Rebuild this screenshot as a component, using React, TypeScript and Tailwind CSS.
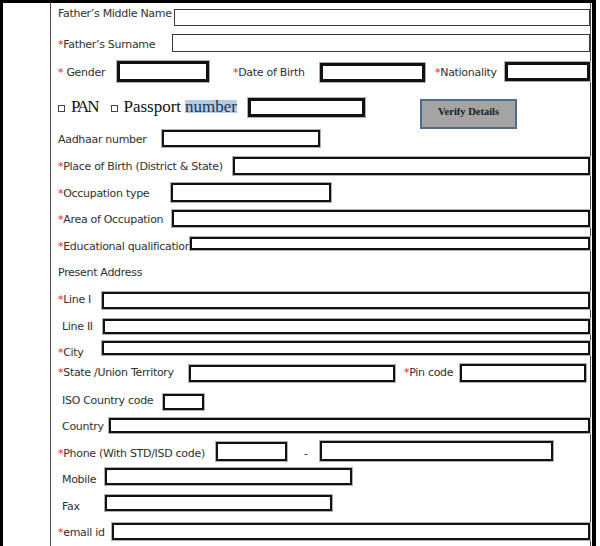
import type { ReactNode } from "react";

// Scanned-PDF style applicant form: labels on the left, black-outlined boxes on the right.

function Label({ req, children, className = "" }: { req?: boolean; children: ReactNode; className?: string }) {
  return (
    <span
      className={`block shrink-0 whitespace-nowrap text-[11px] leading-[13px] tracking-[-0.3px] text-[#303030] ${className}`}
    >
      {req && <span className="text-[#e3262b]">*</span>}
      {children}
    </span>
  );
}

function Field({ className = "", thin }: { className?: string; thin?: boolean }) {
  return (
    <div
      className={`shrink-0 bg-white ${
        thin ? "border-[1.5px] border-[#3a3a3a]" : "border-2 border-[#111] shadow-[0_0_0_1px_#b0b0b0]"
      } ${className}`}
    />
  );
}

function Tick() {
  return <span className="inline-block h-[7px] w-[7px] border border-[#444] align-baseline" />;
}

export default function App() {
  return (
    <div className="h-[546px] w-[600px] overflow-hidden bg-white font-['DejaVu_Sans',sans-serif]">
      <div className="flex h-full w-[596px] border-t-[3px] border-r-[4px] border-l-[3px] border-black">
        <div className="w-[47px] shrink-0" />
        <main className="flex w-[541px] shrink-0 flex-col border-r border-l border-[#4a4a4a] pt-[4px] pl-[7px]">
          {/* Father's middle name */}
          <div className="flex h-[27px] shrink-0 items-start">
            <Label className="w-[116px]">Father’s Middle Name</Label>
            <Field thin className="mt-[2px] h-[17px] flex-1" />
          </div>

          {/* surname */}
          <div className="flex h-[27px] shrink-0 items-start">
            <Label req className="mt-[4px] w-[114px]">Father’s Surname</Label>
            <Field thin className="h-[18px] flex-1" />
          </div>

          {/* gender / dob / nationality */}
          <div className="flex h-[37px] shrink-0 items-start">
            <Label className="mt-[5px] w-[59px]">
              <span className="text-[#e3262b]">*</span> Gender
            </Label>
            <Field className="h-[21px] w-[92px] border-[3px]" />
            <Label req className="mt-[5px] ml-[24px] w-[87px]">Date of Birth</Label>
            <Field className="mt-[2px] h-[19px] w-[105px] border-[3px]" />
            <Label req className="mt-[5px] ml-[10px] w-[70px]">Nationality</Label>
            <Field className="mt-[1px] h-[19px] flex-1 border-[3px]" />
          </div>

          {/* PAN / passport */}
          <div className="flex h-[31px] shrink-0 items-start">
            <div className="shrink-0 whitespace-nowrap font-['Liberation_Serif',serif] text-[17px] leading-[18px] text-[#111]">
              <Tick />
              <span className="ml-[6px] tracking-[-2px]">PAN</span>
              <span className="ml-[14px]">
                <Tick />
              </span>
              <span className="ml-[5px]">Passport</span>
              <span className="ml-[4px] inline-block h-[13px] bg-[#b3cbe4] leading-[13px] text-[#1d3553]">number</span>
            </div>
            <Field className="ml-[11px] h-[19px] w-[117px] border-[3px]" />
            <div className="mt-[1px] ml-[55px] flex h-[30px] w-[97px] shrink-0 justify-center border-2 border-[#4d6b8d] bg-[#a4a4a4] pt-[5px] font-['Liberation_Serif',serif] text-[10.5px] leading-[12px] font-bold text-[#1a1a1a]">
              Verify Details
            </div>
          </div>

          {/* aadhaar */}
          <div className="flex h-[28px] shrink-0 items-start">
            <Label className="mt-[4px] w-[104px]">Aadhaar number</Label>
            <Field className="mt-[1px] h-[17px] w-[158px]" />
          </div>

          <div className="flex h-[26px] shrink-0 items-start">
            <Label req className="mt-[3px] w-[175px]">Place of Birth (District &amp; State)</Label>
            <Field className="h-[18px] flex-1" />
          </div>

          <div className="flex h-[27px] shrink-0 items-start">
            <Label req className="mt-[4px] w-[113px]">Occupation type</Label>
            <Field className="h-[19px] w-[160px]" />
          </div>

          <div className="flex h-[27px] shrink-0 items-start">
            <Label req className="mt-[3px] w-[114px]">Area of Occupation</Label>
            <Field className="h-[17px] flex-1" />
          </div>

          <div className="flex h-[29px] shrink-0 items-start">
            <Label req className="mt-[3px] w-[132px]">Educational qualification</Label>
            <Field className="h-[13px] flex-1" />
          </div>

          <div className="flex h-[26px] shrink-0 items-start">
            <Label>Present Address</Label>
          </div>

          {/* address lines */}
          <div className="flex h-[27px] shrink-0 items-start">
            <Label req className="mt-[1px] w-[44px]">Line I</Label>
            <Field className="h-[17px] flex-1" />
          </div>

          <div className="flex h-[22px] shrink-0 items-start">
            <Label className="mt-[1px] ml-[4px] w-[41px]">Line II</Label>
            <Field className="h-[15px] flex-1" />
          </div>

          <div className="flex h-[23px] shrink-0 items-start">
            <Label req className="mt-[5px] w-[44px]">City</Label>
            <Field className="h-[14px] flex-1" />
          </div>

          <div className="flex h-[30px] shrink-0 items-start">
            <Label req className="mt-[2px] w-[131px]">State /Union Territory</Label>
            <Field className="mt-[1px] h-[17px] w-[206px]" />
            <Label req className="mt-[2px] ml-[9px] w-[56px]">Pin code</Label>
            <Field className="h-[18px] w-[126px]" />
          </div>

          <div className="flex h-[24px] shrink-0 items-start">
            <Label className="ml-[4px] w-[101px]">ISO Country code</Label>
            <Field className="h-[16px] w-[41px]" />
          </div>

          <div className="flex h-[23px] shrink-0 items-start">
            <Label className="mt-[2px] ml-[4px] w-[47px]">Country</Label>
            <Field className="h-[15px] flex-1" />
          </div>

          {/* phone */}
          <div className="flex h-[27px] shrink-0 items-start">
            <Label req className="mt-[6px] w-[158px]">Phone (With STD/ISD code)</Label>
            <Field className="mt-[1px] h-[19px] w-[71px]" />
            <Label className="mt-[6px] ml-[17px] w-[16px]">-</Label>
            <Field className="h-[20px] w-[233px]" />
          </div>

          <div className="flex h-[27px] shrink-0 items-start">
            <Label className="mt-[5px] ml-[4px] w-[43px]">Mobile</Label>
            <Field className="h-[17px] w-[247px]" />
          </div>

          <div className="flex h-[27px] shrink-0 items-start">
            <Label className="mt-[5px] ml-[4px] w-[43px]">Fax</Label>
            <Field className="h-[16px] w-[227px]" />
          </div>

          <div className="flex h-[24px] shrink-0 items-start">
            <Label req className="mt-[4px] w-[54px]">email id</Label>
            <Field className="mt-[1px] h-[17px] flex-1" />
          </div>
        </main>
        <div className="w-[1px] shrink-0" />
      </div>
    </div>
  );
}
